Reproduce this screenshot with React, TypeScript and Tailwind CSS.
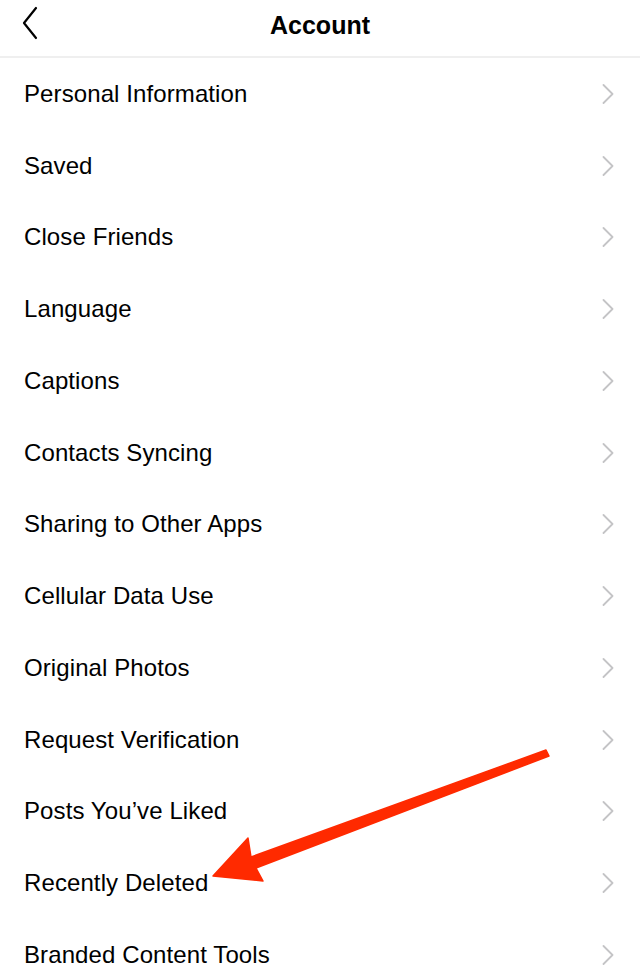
const items = [
  "Personal Information",
  "Saved",
  "Close Friends",
  "Language",
  "Captions",
  "Contacts Syncing",
  "Sharing to Other Apps",
  "Cellular Data Use",
  "Original Photos",
  "Request Verification",
  "Posts You’ve Liked",
  "Recently Deleted",
  "Branded Content Tools",
];

export default function App() {
  return (
    <main className="relative w-[640px] h-[976px] overflow-hidden bg-white font-['Liberation_Sans',Arial,sans-serif] text-black">
      {/* Header */}
      <header className="relative flex h-[58px] items-center justify-center border-b-2 border-[#efefef]">
        <svg
          className="absolute left-[21px] top-[6px]"
          width="20"
          height="34"
          viewBox="0 0 20 34"
          fill="none"
          stroke="#000"
          strokeWidth="2.2"
          strokeLinecap="round"
          strokeLinejoin="round"
        >
          <path d="M15 2 L3 17 L15 32" />
        </svg>
        <h1 className="text-[25px] font-bold leading-none -mt-[6px]">Account</h1>
      </header>

      {/* Rows */}
      <ul>
        {items.map((label) => (
          <li
            key={label}
            className="flex h-[71.75px] items-center justify-between pl-[24px] pr-[26px]"
          >
            <span className="text-[24px] leading-none tracking-[0.1px]">{label}</span>
            <svg
              width="12"
              height="20"
              viewBox="0 0 12 20"
              fill="none"
              stroke="#c4c4c6"
              strokeWidth="1.8"
              strokeLinecap="round"
              strokeLinejoin="round"
            >
              <path d="M1.5 1 L10.5 10 L1.5 19" />
            </svg>
          </li>
        ))}
      </ul>

      {/* Annotation arrow */}
      <svg
        className="pointer-events-none absolute left-0 top-0"
        width="640"
        height="976"
        viewBox="0 0 640 976"
      >
        <polygon
          points="213,876 248,838 251,857 546,750 549,756 256,868 263,881"
          fill="#ff2a00"
          stroke="#ff2a00"
          strokeWidth="1.5"
          strokeLinejoin="round"
        />
      </svg>
    </main>
  );
}
